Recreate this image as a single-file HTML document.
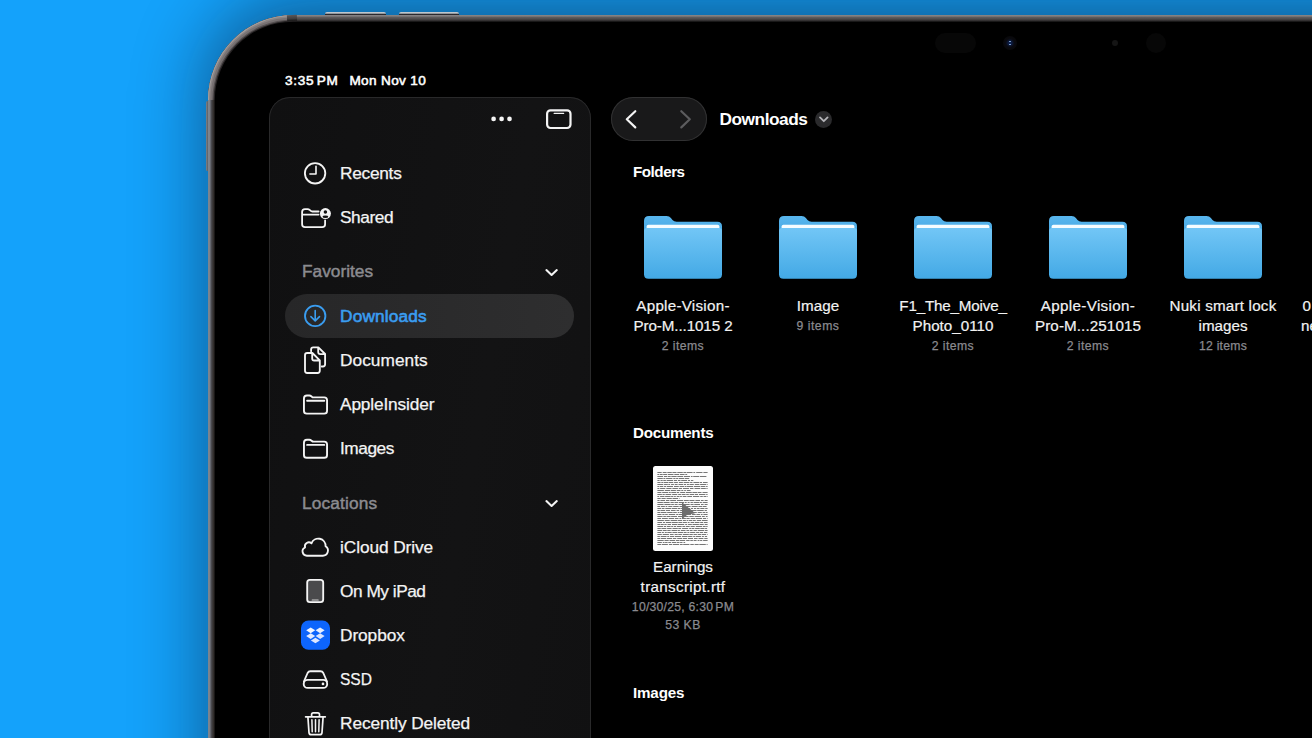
<!DOCTYPE html>
<html>
<head>
<meta charset="utf-8">
<style>
html,body{margin:0;padding:0;}
html{width:1312px;height:738px;overflow:hidden;background:#14a2fb;}
body{width:1312px;height:738px;overflow:hidden;position:relative;background:#14a2fb;font-family:"Liberation Sans",sans-serif;color:#fff;}
.abs{position:absolute;}
#shadow{position:absolute;left:208px;top:15px;width:1400px;height:900px;border-radius:85px;box-shadow:0 -12px 72px 2px rgba(8,8,22,0.47);}
#frame{position:absolute;left:208px;top:15px;width:1400px;height:900px;border-radius:85px;background:#000;
 box-shadow:inset 0 0 0 1px #a5a0a0, inset 0 0 0 2.4px #8a8484, inset 0 0 0 4.4px #777172, inset 0 0 0 5.6px #544f50, inset 0 0 0 6.8px #262324;}
.vbtn{position:absolute;top:11.8px;height:3.6px;border-radius:2px 2px 0 0;background:linear-gradient(#c9d2d9,#aab2b8 45%,#2c2c32 70%,#26262b);}
#sbtn{position:absolute;left:206.2px;top:101px;width:2.4px;height:70px;border-radius:1.5px 0 0 1.5px;background:linear-gradient(90deg,#7d8389,#4c4c50);}
.t{position:absolute;white-space:nowrap;line-height:20px;}
#sidebar{position:absolute;left:269px;top:97.2px;width:322px;height:700px;border-radius:21px;background:linear-gradient(100deg,#101011,#131314 60%,#111112);box-shadow:inset 0 0 0 1px #29292a;}
.row{font-size:17.3px;left:340px;color:#f4f4f4;-webkit-text-stroke:0.25px #f4f4f4;}
.sec{font-size:17.3px;left:302px;color:#8b8b90;-webkit-text-stroke:0.45px #8b8b90;}
#sel{position:absolute;left:285px;top:294px;width:289.4px;height:44px;border-radius:22px;background:linear-gradient(90deg,#272728,#2e2e2f);}
.h{font-size:15.2px;font-weight:bold;left:633px;color:#fff;}
.fn{font-size:15.2px;text-align:center;width:140px;color:#f2f2f2;-webkit-text-stroke:0.2px #f2f2f2;}
.fs{font-size:12.2px;text-align:center;width:140px;color:#8a8a8f;-webkit-text-stroke:0.25px #8a8a8f;}
svg{position:absolute;overflow:visible;}
</style>
</head>
<body>
<div id="root" style="position:absolute;left:0;top:0;width:1312px;height:738px;overflow:hidden;">
<div id="shadow"></div>
<div class="vbtn" style="left:325px;width:61px;"></div>
<div class="vbtn" style="left:399px;width:60px;"></div>
<div id="sbtn"></div>
<div id="frame"></div>
<div class="abs" style="left:296px;top:15px;width:1016px;height:7px;background:linear-gradient(#8b8889 0,#7a7778 18%,#5d5a5b 35%,#4b4849 60%,#2f2d2e 82%,#0a0a0a 100%);"></div>
<div class="abs" style="left:208px;top:100px;width:7px;height:640px;background:linear-gradient(90deg,#6d7f92 0,#82878f 10%,#7b7f87 27%,#55565c 42%,#403f42 56%,#35312f 76%,#1c1a19 92%,#000 100%);"></div>
<div class="abs" style="left:287px;top:15.4px;width:10px;height:6.4px;background:linear-gradient(#5a5758,#403e3f 60%,#171616);transform:rotate(-3deg);"></div>

<!-- sensors -->
<div class="abs" style="left:935px;top:33px;width:41px;height:20px;border-radius:10px;background:#070707;"></div>
<div class="abs" style="left:1003px;top:36px;width:14px;height:14px;border-radius:7px;background:radial-gradient(#0d214f 0,#0c1c42 18%,#0a0a10 42%,#08080a 70%,#000 100%);"></div>
<div class="abs" style="left:1008.8px;top:40.8px;width:2.2px;height:1.5px;border-radius:0.6px;background:#86a9dc;"></div>
<div class="abs" style="left:1008.8px;top:43.8px;width:2.2px;height:1.5px;border-radius:0.6px;background:#86a9dc;"></div>
<div class="abs" style="left:1112px;top:40px;width:6px;height:6px;border-radius:3px;background:#151515;"></div>
<div class="abs" style="left:1146px;top:33px;width:20px;height:20px;border-radius:10px;background:#070707;"></div>

<!-- status bar -->
<div class="t" id="st1" style="word-spacing:-2.2px;letter-spacing:0.72px;left:285px;top:71.4px;font-size:13.6px;-webkit-text-stroke:0.55px #fff;">3:35 PM</div>
<div class="t" id="st2" style="letter-spacing:0.35px;left:349.4px;top:71.4px;font-size:13.6px;-webkit-text-stroke:0.55px #fff;">Mon Nov 10</div>

<div id="sidebar"></div>
<div id="sel"></div>

<!-- sidebar text -->
<div class="t row" id="r1" style="letter-spacing:-0.27px;top:163px;">Recents</div>
<div class="t row" id="r2" style="letter-spacing:-0.44px;top:207px;">Shared</div>
<div class="t sec" id="r3" style="top:261px;">Favorites</div>
<div class="t row" id="r4" style="letter-spacing:0.15px;top:305.5px;color:#3a9df0;-webkit-text-stroke:0.6px #3a9df0;">Downloads</div>
<div class="t row" id="r5" style="letter-spacing:0.03px;top:349.5px;">Documents</div>
<div class="t row" id="r6" style="letter-spacing:-0.15px;top:394px;">AppleInsider</div>
<div class="t row" id="r7" style="letter-spacing:-0.46px;top:438px;">Images</div>
<div class="t sec" id="r8" style="letter-spacing:0.16px;top:493px;">Locations</div>
<div class="t row" id="r9" style="letter-spacing:-0.09px;top:537px;">iCloud Drive</div>
<div class="t row" id="r10" style="letter-spacing:-0.48px;top:581px;">On My iPad</div>
<div class="t row" id="r11" style="letter-spacing:-0.08px;top:625px;">Dropbox</div>
<div class="t row" id="r12" style="transform:scaleX(0.9);transform-origin:0 50%;top:669px;">SSD</div>
<div class="t row" id="r13" style="letter-spacing:-0.1px;top:713px;">Recently Deleted</div>

<!-- nav -->
<div class="abs" id="nav" style="left:610.5px;top:97px;width:96.5px;height:44px;border-radius:22px;background:#19191a;box-shadow:inset 0 0 0 1px #313132;"></div>
<div class="t" id="title" style="letter-spacing:-0.47px;left:719.5px;top:109px;font-size:17.3px;font-weight:bold;">Downloads</div>
<div class="abs" style="left:815.3px;top:110.5px;width:17px;height:17px;border-radius:9px;background:#2a2a2c;"></div>

<!-- icons -->
<svg width="1312" height="738" viewBox="0 0 1312 738" style="left:0;top:0;" fill="none" stroke="#f4f4f4" stroke-width="1.85" stroke-linecap="round" stroke-linejoin="round">
<g fill="#f4f4f4" stroke="none"><circle cx="493.6" cy="118.9" r="2.35"/><circle cx="501.6" cy="118.9" r="2.35"/><circle cx="509.5" cy="118.9" r="2.35"/></g>
<rect x="547.1" y="110.4" width="23.4" height="17.6" rx="3.4" stroke-width="2.2"/><path d="M554.2 113.4 H563.6" stroke-width="1.3"/>
<circle cx="315.1" cy="173.3" r="10.2"/><path d="M316 166.3 V174 H309.9" stroke-width="1.6"/>
<path d="M318.6 211.5 H312.4 Q311.3 211.5 310.5 210.7 L309.6 209.9 Q308.8 209.2 307.6 209.2 H305 Q302.1 209.2 302.1 212.1 V224.3 Q302.1 227.2 305 227.2 H322.2 Q325.1 227.2 325.1 224.3 V220.3 M302.4 214.6 H318.6" stroke-width="1.8"/>
<circle cx="325.4" cy="213.6" r="5.5" fill="#f4f4f4" stroke="none"/><circle cx="325.4" cy="211.9" r="1.75" fill="#111" stroke="none"/><ellipse cx="325.4" cy="216.7" rx="2.9" ry="1.25" fill="#111" stroke="none"/>
<path d="M546.4 270.1 L551.6 274.9 L556.8 270.1" stroke-width="2.1"/><path d="M546.4 501.1 L551.6 505.9 L556.8 501.1" stroke-width="2.1"/>
<g stroke="#3a9df0"><circle cx="315.2" cy="315.9" r="10.2"/><path d="M315.2 310.6 V320.6 M310.9 316.6 L315.2 320.9 L319.5 316.6" stroke-width="1.6"/></g>
<path d="M311.1 351.3 V349.5 Q311.1 347.3 313.3 347.3 H318.4 L325.1 354 V364.3 Q325.1 366.5 322.9 366.5 H321.7 M318.2 347.6 V352 Q318.2 354.1 320.3 354.1 H324.8"/>
<path d="M305 355.2 Q305 353 307.2 353 H312.4 L319.8 360.4 V370.8 Q319.8 373 317.6 373 H307.2 Q305 373 305 370.8 Z M312.2 353.3 V358.4 Q312.2 360.5 314.3 360.5 H319.5"/>
<path stroke-width="1.9" d="M303.95,398.6 Q303.95,395.55 307,395.55 H309.3 Q310.5,395.55 311.3,396.3 L311.9,396.8 Q312.5,397.40000000000003 313.7,397.40000000000003 H324.2 Q327.05,397.40000000000003 327.05,400.3 V410.70000000000005 Q327.05,413.6 324.2,413.6 H306.8 Q303.95,413.6 303.95,410.70000000000005 Z M307.1,400.70000000000005 H324.3"/>
<path stroke-width="1.9" d="M303.95,442.8 Q303.95,439.75 307,439.75 H309.3 Q310.5,439.75 311.3,440.5 L311.9,441.0 Q312.5,441.6 313.7,441.6 H324.2 Q327.05,441.6 327.05,444.5 V454.90000000000003 Q327.05,457.8 324.2,457.8 H306.8 Q303.95,457.8 303.95,454.90000000000003 Z M307.1,444.90000000000003 H324.3"/>
<path d="M306.85 555.7 H322.85 A5.1 5.1 0 0 0 325.59 546.3 A7.3 7.3 0 0 0 311.47 543.33 A4 4 0 0 0 305.05 547.49 A4.3 4.3 0 0 0 306.85 555.7 Z"/>
<rect x="307.2" y="579.9" width="16" height="22.2" rx="2.6" fill="#4a4a4c"/><path d="M312.2 600 H318.2" stroke-width="1.1" stroke="#d0d0d0"/>
<rect x="301" y="620.6" width="29" height="29.2" rx="7.5" fill="#0d65fc" stroke="none"/>
<path d="M306.2 630.3 L310.7 627.4499999999999 L315.2 630.3 L310.7 633.15 Z" fill="#f3f6ff" stroke="none"/><path d="M315.6 630.3 L320.1 627.4499999999999 L324.6 630.3 L320.1 633.15 Z" fill="#e9f0ff" stroke="none"/><path d="M306.2 636.1 L310.7 633.25 L315.2 636.1 L310.7 638.95 Z" fill="#e1eaff" stroke="none"/><path d="M315.6 636.1 L320.1 633.25 L324.6 636.1 L320.1 638.95 Z" fill="#d8e4ff" stroke="none"/><path d="M310.9 640.5 L315.4 637.65 L319.9 640.5 L315.4 643.35 Z" fill="#dde7ff" stroke="none"/>
<path d="M303.9 681.5 L307.6 673 Q308.5 671.2 310.4 671.2 H320.5 Q322.4 671.2 323.3 673 L327 681.5"/><rect x="303.7" y="679.9" width="23.5" height="8" rx="4"/><circle cx="323" cy="683.9" r="1.35" fill="#f4f4f4" stroke="none"/>
<path d="M305.6 716.8 H325.3 M311.6 716.5 V714.6 Q311.6 712.9 313.3 712.9 H317.8 Q319.5 712.9 319.5 714.6 V716.5 M307.9 717 L309 732.6 Q309.2 734.7 311.3 734.7 H319.7 Q321.8 734.7 322 732.6 L323.1 717" stroke-width="1.7"/><path d="M311.9 719.8 L312.2 731.8 M315.5 719.8 V731.8 M319.1 719.8 L318.8 731.8" stroke-width="1.5"/>
<path d="M635.3 111.2 L626.8 119.3 L635.3 127.4" stroke-width="2.2"/><path d="M681.3 111.2 L689.8 119.3 L681.3 127.4" stroke="#5c5c5e" stroke-width="2.2"/>
<path d="M820 117.4 L823.8 121.2 L827.6 117.4" stroke="#b4b4b8" stroke-width="1.8"/>
</svg>

<!-- headings -->
<div class="t h" id="h1" style="letter-spacing:-0.47px;top:162px;">Folders</div>
<div class="t h" id="h2" style="letter-spacing:-0.26px;top:423px;">Documents</div>
<div class="t h" id="h3" style="letter-spacing:-0.18px;top:683px;">Images</div>

<!-- grid -->
<svg width="78" height="63" viewBox="0 0 78 63" style="left:644px;top:216px;">
<defs><linearGradient id="fg0" x1="0" y1="0" x2="0" y2="1"><stop offset="0" stop-color="#72c6f6"/><stop offset="1" stop-color="#43a9e5"/></linearGradient>
<linearGradient id="bg0" x1="0" y1="0" x2="0" y2="1"><stop offset="0" stop-color="#58b6ee"/><stop offset="1" stop-color="#3f9fdc"/></linearGradient></defs>
<path d="M0 5 Q0 0 5 0 H22.6 Q25.4 0 26.9 1.9 L28.5 3.9 Q30 5.7 32.6 5.7 H73.4 Q78 5.7 78 10.3 V30 H0 Z" fill="url(#bg0)"/>
<rect x="2.6" y="8.7" width="72.8" height="7" rx="1.8" fill="#f6fcff"/>
<path d="M0 15 Q0 11.9 3.1 11.9 H74.9 Q78 11.9 78 15 V58.2 Q78 62.7 73.5 62.7 H4.5 Q0 62.7 0 58.2 Z" fill="url(#fg0)"/>
</svg>
<svg width="78" height="63" viewBox="0 0 78 63" style="left:779px;top:216px;">
<defs><linearGradient id="fg1" x1="0" y1="0" x2="0" y2="1"><stop offset="0" stop-color="#72c6f6"/><stop offset="1" stop-color="#43a9e5"/></linearGradient>
<linearGradient id="bg1" x1="0" y1="0" x2="0" y2="1"><stop offset="0" stop-color="#58b6ee"/><stop offset="1" stop-color="#3f9fdc"/></linearGradient></defs>
<path d="M0 5 Q0 0 5 0 H22.6 Q25.4 0 26.9 1.9 L28.5 3.9 Q30 5.7 32.6 5.7 H73.4 Q78 5.7 78 10.3 V30 H0 Z" fill="url(#bg1)"/>
<rect x="2.6" y="8.7" width="72.8" height="7" rx="1.8" fill="#f6fcff"/>
<path d="M0 15 Q0 11.9 3.1 11.9 H74.9 Q78 11.9 78 15 V58.2 Q78 62.7 73.5 62.7 H4.5 Q0 62.7 0 58.2 Z" fill="url(#fg1)"/>
</svg>
<svg width="78" height="63" viewBox="0 0 78 63" style="left:914px;top:216px;">
<defs><linearGradient id="fg2" x1="0" y1="0" x2="0" y2="1"><stop offset="0" stop-color="#72c6f6"/><stop offset="1" stop-color="#43a9e5"/></linearGradient>
<linearGradient id="bg2" x1="0" y1="0" x2="0" y2="1"><stop offset="0" stop-color="#58b6ee"/><stop offset="1" stop-color="#3f9fdc"/></linearGradient></defs>
<path d="M0 5 Q0 0 5 0 H22.6 Q25.4 0 26.9 1.9 L28.5 3.9 Q30 5.7 32.6 5.7 H73.4 Q78 5.7 78 10.3 V30 H0 Z" fill="url(#bg2)"/>
<rect x="2.6" y="8.7" width="72.8" height="7" rx="1.8" fill="#f6fcff"/>
<path d="M0 15 Q0 11.9 3.1 11.9 H74.9 Q78 11.9 78 15 V58.2 Q78 62.7 73.5 62.7 H4.5 Q0 62.7 0 58.2 Z" fill="url(#fg2)"/>
</svg>
<svg width="78" height="63" viewBox="0 0 78 63" style="left:1049px;top:216px;">
<defs><linearGradient id="fg3" x1="0" y1="0" x2="0" y2="1"><stop offset="0" stop-color="#72c6f6"/><stop offset="1" stop-color="#43a9e5"/></linearGradient>
<linearGradient id="bg3" x1="0" y1="0" x2="0" y2="1"><stop offset="0" stop-color="#58b6ee"/><stop offset="1" stop-color="#3f9fdc"/></linearGradient></defs>
<path d="M0 5 Q0 0 5 0 H22.6 Q25.4 0 26.9 1.9 L28.5 3.9 Q30 5.7 32.6 5.7 H73.4 Q78 5.7 78 10.3 V30 H0 Z" fill="url(#bg3)"/>
<rect x="2.6" y="8.7" width="72.8" height="7" rx="1.8" fill="#f6fcff"/>
<path d="M0 15 Q0 11.9 3.1 11.9 H74.9 Q78 11.9 78 15 V58.2 Q78 62.7 73.5 62.7 H4.5 Q0 62.7 0 58.2 Z" fill="url(#fg3)"/>
</svg>
<svg width="78" height="63" viewBox="0 0 78 63" style="left:1184px;top:216px;">
<defs><linearGradient id="fg4" x1="0" y1="0" x2="0" y2="1"><stop offset="0" stop-color="#72c6f6"/><stop offset="1" stop-color="#43a9e5"/></linearGradient>
<linearGradient id="bg4" x1="0" y1="0" x2="0" y2="1"><stop offset="0" stop-color="#58b6ee"/><stop offset="1" stop-color="#3f9fdc"/></linearGradient></defs>
<path d="M0 5 Q0 0 5 0 H22.6 Q25.4 0 26.9 1.9 L28.5 3.9 Q30 5.7 32.6 5.7 H73.4 Q78 5.7 78 10.3 V30 H0 Z" fill="url(#bg4)"/>
<rect x="2.6" y="8.7" width="72.8" height="7" rx="1.8" fill="#f6fcff"/>
<path d="M0 15 Q0 11.9 3.1 11.9 H74.9 Q78 11.9 78 15 V58.2 Q78 62.7 73.5 62.7 H4.5 Q0 62.7 0 58.2 Z" fill="url(#fg4)"/>
</svg>
<div class="t fn" id="f0a" style="letter-spacing:0.26px;left:613px;top:296px;"><span id="f0as">Apple-Vision-</span></div>
<div class="t fn" id="f0b" style="letter-spacing:-0.1px;left:613px;top:316px;"><span id="f0bs">Pro-M...1015 2</span></div>
<div class="t fs" id="f0c" style="letter-spacing:0.43px;left:613px;top:336px;"><span id="f0cs">2 items</span></div>
<div class="t fn" id="f1a" style="letter-spacing:0.04px;left:748px;top:296px;"><span id="f1as">Image</span></div>
<div class="t fs" id="f1c" style="letter-spacing:0.5px;left:748px;top:316px;"><span id="f1cs">9 items</span></div>
<div class="t fn" id="f2a" style="letter-spacing:-0.18px;left:883px;top:296px;"><span id="f2as">F1_The_Moive_</span></div>
<div class="t fn" id="f2b" style="left:883px;top:316px;"><span id="f2bs">Photo_0110</span></div>
<div class="t fs" id="f2c" style="letter-spacing:0.43px;left:883px;top:336px;"><span id="f2cs">2 items</span></div>
<div class="t fn" id="f3a" style="letter-spacing:0.33px;left:1018px;top:296px;"><span id="f3as">Apple-Vision-</span></div>
<div class="t fn" id="f3b" style="letter-spacing:0.1px;left:1018px;top:316px;"><span id="f3bs">Pro-M...251015</span></div>
<div class="t fs" id="f3c" style="letter-spacing:0.43px;left:1018px;top:336px;"><span id="f3cs">2 items</span></div>
<div class="t fn" id="f4a" style="letter-spacing:0.21px;left:1153px;top:296px;"><span id="f4as">Nuki smart lock</span></div>
<div class="t fn" id="f4b" style="left:1153px;top:316px;"><span id="f4bs">images</span></div>
<div class="t fs" id="f4c" style="letter-spacing:0.25px;left:1153px;top:336px;"><span id="f4cs">12 items</span></div>
<div class="t fn" id="f5a" style="left:1302.5px;top:296px;width:auto;text-align:left;">0</div>
<div class="t fn" id="f5b" style="left:1301px;top:316px;width:auto;text-align:left;">ne</div>
<div class="abs" id="doc" style="left:653.4px;top:466.4px;width:59.4px;height:84.4px;border-radius:2.5px;background:#fcfcfc;"></div>
<svg width="1312" height="738" viewBox="0 0 1312 738" style="left:0;top:0;"><path d="M657.4 472.5h4.3M662.7 472.5h3.9M667.3 472.5h4.5M672.4 472.5h4.1M677.3 472.5h5.5M683.4 472.5h3.1M687.0 472.5h5.6M693.4 472.5h1.8M696.2 472.5h6.3M703.4 472.5h4.2M657.4 474.5h1.9M659.9 474.5h2.8M663.2 474.5h3.9M667.8 474.5h5.7M674.3 474.5h4.7M679.8 474.5h4.8M685.3 474.5h1.9M657.4 476.5h5.7M664.0 476.5h3.1M667.7 476.5h3.0M671.3 476.5h5.4M677.3 476.5h5.7M683.8 476.5h6.3M691.0 476.5h1.6M693.2 476.5h6.1M700.0 476.5h6.4M657.4 478.5h5.4M663.4 478.5h2.0M666.1 478.5h6.3M673.3 478.5h2.2M676.1 478.5h2.1M678.8 478.5h5.5M684.9 478.5h4.3M657.4 480.5h2.2M660.5 480.5h2.2M663.3 480.5h2.6M666.6 480.5h6.4M673.9 480.5h3.1M677.9 480.5h2.6M681.2 480.5h5.8M687.9 480.5h2.1M690.9 480.5h2.4M657.4 482.5h3.2M661.3 482.5h2.0M663.8 482.5h4.5M668.8 482.5h4.5M674.1 482.5h3.8M678.9 482.5h4.0M683.6 482.5h5.8M690.1 482.5h2.4M693.4 482.5h5.6M699.6 482.5h2.5M703.0 482.5h4.6M657.4 484.5h5.9M664.1 484.5h3.7M668.3 484.5h1.8M671.1 484.5h2.8M674.7 484.5h2.9M678.5 484.5h4.5M683.7 484.5h2.5M687.0 484.5h1.9M689.5 484.5h4.3M694.8 484.5h4.6M700.1 484.5h6.1M706.8 484.5h0.8M657.4 486.5h1.9M659.9 486.5h3.4M664.1 486.5h2.2M667.0 486.5h6.0M674.0 486.5h4.8M679.6 486.5h4.5M684.7 486.5h1.8M686.9 486.5h6.1M693.8 486.5h6.3M700.7 486.5h4.7M706.1 486.5h1.5M657.4 488.5h2.0M660.1 488.5h5.2M666.3 488.5h5.2M672.4 488.5h5.5M678.8 488.5h3.3M683.0 488.5h6.0M689.9 488.5h3.6M694.5 488.5h5.8M701.1 488.5h4.7M706.4 488.5h1.2M657.4 490.5h6.5M664.8 490.5h5.2M670.7 490.5h5.2M676.7 490.5h3.8M681.3 490.5h2.0M684.2 490.5h1.7M686.8 490.5h3.8M657.4 492.5h4.0M662.2 492.5h6.1M669.0 492.5h1.7M671.3 492.5h4.9M676.8 492.5h2.4M680.2 492.5h4.8M685.8 492.5h6.0M692.4 492.5h4.9M697.8 492.5h3.7M702.5 492.5h5.1M657.4 494.5h4.5M662.5 494.5h2.3M665.5 494.5h5.7M672.2 494.5h5.1M678.2 494.5h3.0M681.8 494.5h3.8M686.2 494.5h2.6M689.6 494.5h4.7M695.0 494.5h3.1M699.0 494.5h6.4M706.2 494.5h1.4M657.4 496.5h1.8M660.1 496.5h4.4M665.1 496.5h5.5M671.1 496.5h2.3M674.1 496.5h1.7M676.7 496.5h2.8M680.1 496.5h1.8M682.7 496.5h3.8M687.3 496.5h4.8M693.0 496.5h6.3M700.2 496.5h2.6M703.5 496.5h2.5M706.5 496.5h1.1M657.4 498.5h3.3M661.5 498.5h4.2M666.5 498.5h5.3M672.5 498.5h5.5M678.9 498.5h0.6M657.4 500.5h2.2M660.4 500.5h4.7M666.0 500.5h3.4M670.2 500.5h5.9M677.0 500.5h6.2M684.0 500.5h4.8M689.4 500.5h5.1M695.4 500.5h4.7M701.0 500.5h2.6M704.6 500.5h3.0M657.4 502.5h5.5M663.5 502.5h6.1M670.5 502.5h3.3M674.4 502.5h3.8M678.9 502.5h5.4M685.0 502.5h1.7M687.7 502.5h1.9M690.5 502.5h2.4M693.6 502.5h5.5M699.6 502.5h2.3M702.7 502.5h4.9M657.4 504.5h6.2M664.4 504.5h6.3M671.2 504.5h2.7M674.6 504.5h3.0M678.5 504.5h4.7M684.0 504.5h5.7M690.5 504.5h3.1M694.3 504.5h5.7M701.0 504.5h2.6M704.6 504.5h3.0M657.4 506.5h2.6M660.8 506.5h4.1M665.6 506.5h1.7M668.3 506.5h4.1M673.2 506.5h5.5M679.5 506.5h4.0M684.3 506.5h1.9M687.0 506.5h3.6M691.6 506.5h6.1M698.4 506.5h3.9M702.9 506.5h3.7M657.4 508.5h3.9M662.0 508.5h2.5M665.3 508.5h6.1M672.0 508.5h5.4M678.0 508.5h2.6M681.1 508.5h5.0M686.8 508.5h3.3M690.9 508.5h2.1M693.9 508.5h2.2M696.8 508.5h2.8M700.3 508.5h4.2M705.2 508.5h2.4M657.4 510.5h2.4M660.4 510.5h4.7M665.9 510.5h4.2M671.0 510.5h4.6M676.5 510.5h2.7M680.2 510.5h5.6M686.7 510.5h3.1M690.5 510.5h6.1M697.2 510.5h6.5M704.6 510.5h2.3M657.4 512.5h2.9M660.8 512.5h5.7M667.2 512.5h5.5M673.2 512.5h3.6M677.7 512.5h1.7M679.9 512.5h4.9M685.8 512.5h6.3M692.7 512.5h4.1M697.7 512.5h4.1M702.6 512.5h2.5M705.7 512.5h1.9M657.4 514.5h4.1M662.3 514.5h2.3M665.2 514.5h2.6M668.7 514.5h6.5M676.2 514.5h2.1M678.8 514.5h6.3M685.7 514.5h5.3M691.8 514.5h3.9M696.4 514.5h3.7M700.9 514.5h1.7M703.4 514.5h4.2M657.4 516.5h5.2M663.3 516.5h2.6M666.5 516.5h4.1M671.1 516.5h6.0M678.0 516.5h5.1M683.9 516.5h4.7M689.3 516.5h4.5M694.6 516.5h6.4M701.9 516.5h2.9M705.8 516.5h1.8M657.4 518.5h3.6M661.9 518.5h5.9M668.7 518.5h5.4M674.9 518.5h3.6M679.4 518.5h1.9M682.0 518.5h3.9M686.4 518.5h3.3M690.6 518.5h4.7M695.8 518.5h6.2M702.9 518.5h3.3M707.0 518.5h0.6M657.4 520.5h6.5M664.7 520.5h5.0M670.6 520.5h6.4M677.6 520.5h4.6M683.0 520.5h2.9M686.6 520.5h1.8M689.0 520.5h3.4M693.0 520.5h2.8M696.8 520.5h4.3M701.9 520.5h5.7M657.4 522.5h4.7M663.0 522.5h2.0M665.8 522.5h5.3M671.6 522.5h6.2M678.4 522.5h3.9M682.9 522.5h4.0M687.7 522.5h1.9M690.6 522.5h3.7M695.0 522.5h4.5M700.2 522.5h3.0M704.0 522.5h3.6M657.4 524.5h3.1M661.0 524.5h2.8M664.3 524.5h2.4M667.5 524.5h3.5M672.0 524.5h5.3M677.8 524.5h6.4M685.2 524.5h2.0M688.1 524.5h3.7M692.5 524.5h6.4M699.5 524.5h4.2M704.7 524.5h2.9M657.4 526.5h5.6M663.8 526.5h2.2M666.8 526.5h3.8M671.2 526.5h1.9M673.8 526.5h2.2M676.8 526.5h4.9M682.4 526.5h2.9M686.0 526.5h3.7M690.6 526.5h4.2M695.8 526.5h6.3M702.9 526.5h2.8M706.2 526.5h1.4M657.4 528.5h3.4M661.4 528.5h5.0M667.1 528.5h4.5M672.5 528.5h5.3M678.3 528.5h2.8M682.1 528.5h6.1M689.2 528.5h1.8M691.5 528.5h2.9M695.1 528.5h4.7M700.3 528.5h4.3M705.1 528.5h2.0M657.4 530.5h4.7M662.8 530.5h3.9M667.3 530.5h3.3M671.5 530.5h5.7M677.7 530.5h2.2M680.8 530.5h4.7M686.4 530.5h2.6M689.7 530.5h2.9M693.5 530.5h3.4M697.7 530.5h6.4M704.8 530.5h2.8M657.4 532.5h3.7M661.8 532.5h2.1M664.8 532.5h2.0M667.3 532.5h4.4M672.4 532.5h5.0M678.0 532.5h5.4M684.0 532.5h2.6M687.4 532.5h2.0M690.1 532.5h5.2M696.1 532.5h3.0M699.7 532.5h3.4M703.9 532.5h3.4M657.4 534.5h4.4M662.7 534.5h6.2M669.9 534.5h3.7M674.6 534.5h3.1M678.3 534.5h3.6M682.8 534.5h6.0M689.4 534.5h3.4M693.5 534.5h3.4M697.6 534.5h3.5M701.7 534.5h4.4M706.9 534.5h0.7M657.4 536.5h2.5M660.7 536.5h5.9M667.3 536.5h1.7M669.8 536.5h4.3M674.8 536.5h6.3M682.0 536.5h5.5M688.1 536.5h4.3M693.2 536.5h2.0M695.8 536.5h5.2M701.9 536.5h2.0M704.8 536.5h2.3M657.4 538.5h2.8M660.8 538.5h5.4M666.9 538.5h5.3M673.0 538.5h3.3M677.2 538.5h4.9M682.8 538.5h4.2M687.9 538.5h5.1M694.0 538.5h3.6M698.5 538.5h4.9M704.3 538.5h3.3M657.4 540.5h6.3M664.5 540.5h4.2M669.5 540.5h5.5M675.8 540.5h3.7M680.0 540.5h5.2M686.2 540.5h3.4M690.3 540.5h2.6M693.6 540.5h3.0M697.6 540.5h1.9M700.1 540.5h2.2M703.1 540.5h4.5M657.4 542.5h4.5M662.8 542.5h1.8M665.1 542.5h2.5M668.3 542.5h2.8M671.9 542.5h4.5M677.0 542.5h2.5M680.1 542.5h2.4M683.5 542.5h1.7M657.4 544.5h3.9M662.0 544.5h5.9M668.9 544.5h3.3M672.9 544.5h6.3M680.0 544.5h2.7M683.2 544.5h6.2M690.3 544.5h3.5M694.6 544.5h4.1M699.3 544.5h6.5M706.6 544.5h1.0" stroke="#2a2a2a" stroke-width="1" fill="none" opacity="0.64"/>
<path d="M682 502.2 L694.4 512.6 Q695 513.2 694.2 513.4 L687.6 514.4 L683.4 518 Q682 519 682 517.4 Z" fill="#6d6d6d"/></svg>
<div class="t fn" id="d1" style="left:613px;top:557px;">Earnings</div>
<div class="t fn" id="d2" style="letter-spacing:0.33px;left:613px;top:577px;">transcript.rtf</div>
<div class="t fs" id="d3" style="letter-spacing:0.25px;left:613px;top:596.5px;">10/30/25, 6:30<span style="margin-left:-1.6px"> PM</span></div>
<div class="t fs" id="d4" style="letter-spacing:0.45px;left:613px;top:615px;">53 KB</div>
</div>
</body>
</html>
